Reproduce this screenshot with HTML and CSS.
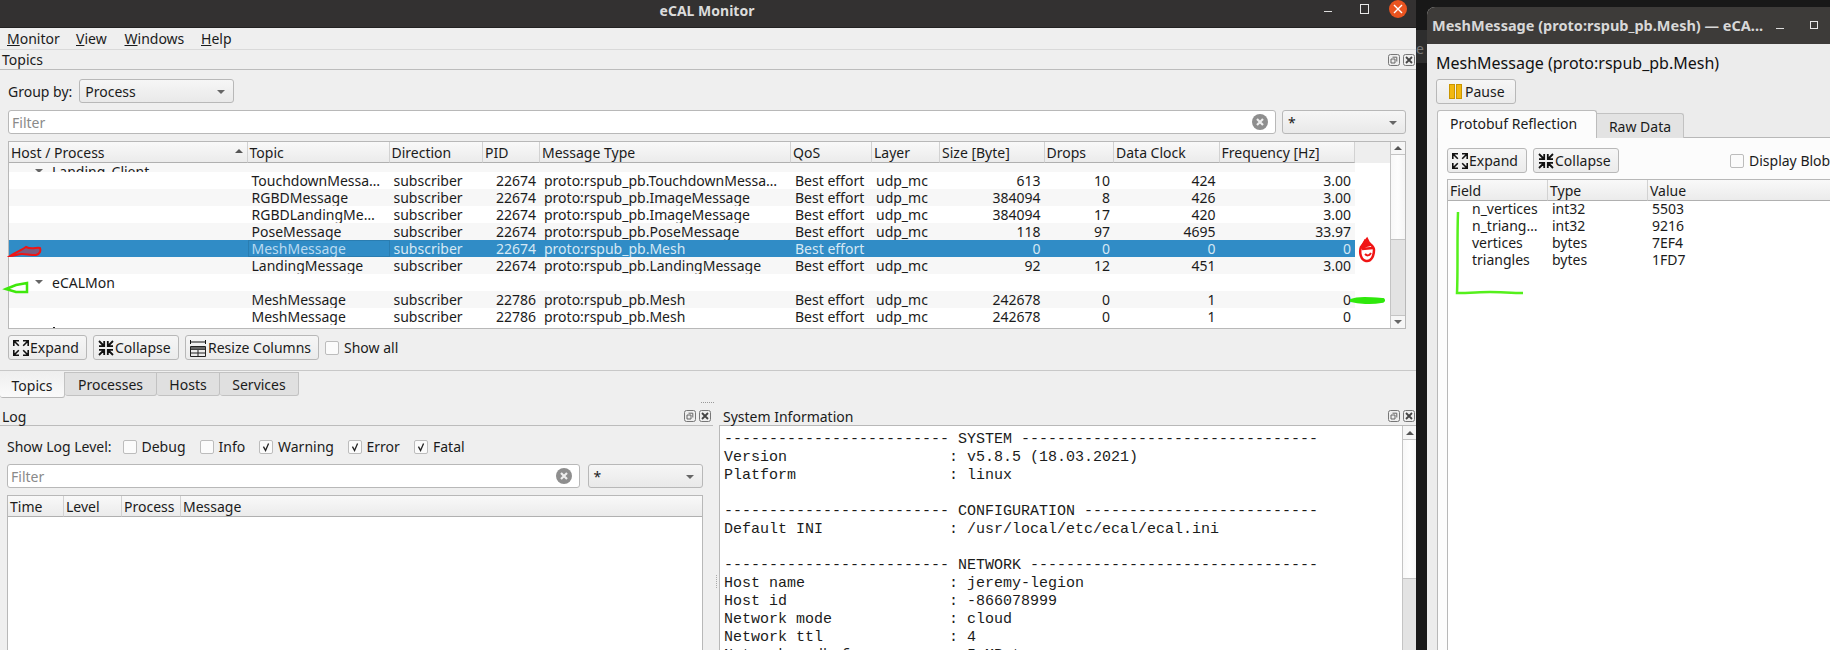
FILE: index.html
```html
<!DOCTYPE html>
<html lang="en">
<head>
<meta charset="utf-8">
<title>eCAL Monitor</title>
<link rel="stylesheet" href="styles.css">
</head>
<body>
<svg class="defs" width="0" height="0" aria-hidden="true">
  <symbol id="i-expand" viewBox="0 0 16 16"><path d="M.8 6V.8H6M.8 .8l5 5M10 .8h5.200V6M15.200 .8l-5 5M.8 10v5.200H6M.8 15.200l5-5M10 15.200h5.200V10M15.200 15.200l-5-5" fill="none" stroke="#111" stroke-width="1.600"/></symbol>
  <symbol id="i-collapse" viewBox="0 0 16 16"><path d="M1 1l5 5M6.200 1v5.200H1M15 1l-5 5M9.800 1v5.200H15M1 15l5-5M6.200 15V9.800H1M15 15l-5-5M9.800 15V9.800H15" fill="none" stroke="#111" stroke-width="1.800"/></symbol>
  <symbol id="i-resize" viewBox="0 0 16 18"><path d="M.5 1v4M15.500 1v4M1 3h14" fill="none" stroke="#111" stroke-width="1"/><path d="M.5 7.500h15v10H.5zM.5 10.500h15M8 7.500v10M.5 14h15" fill="none" stroke="#222" stroke-width="1"/><path d="M1 8h14v2.500H1z" fill="#666"/></symbol>
  <symbol id="i-float" viewBox="0 0 12 12"><rect x=".5" y=".5" width="11" height="11" rx="2" fill="#eee" stroke="#777"/><path d="M4.500 3.200h4.300v4.300M3 5h4v4H3z" fill="none" stroke="#666"/></symbol>
  <symbol id="i-close" viewBox="0 0 12 12"><rect x=".5" y=".5" width="11" height="11" rx="2" fill="#eee" stroke="#777"/><path d="M3 3l6 6M9 3l-6 6" stroke="#444" stroke-width="1.800"/></symbol>
  <symbol id="i-clear" viewBox="0 0 16 16"><circle cx="8" cy="8" r="8" fill="#8e8e8e"/><path d="M5 5l6 6M11 5l-6 6" stroke="#eee" stroke-width="2.200"/></symbol>
  <symbol id="i-check" viewBox="0 0 14 14"><path d="M4 6.500l2.500 4.500 3.500-8" fill="none" stroke="#222" stroke-width="1.500"/></symbol>
</svg>

<div class="desktop">
  <div class="ghost">e</div>

  <main class="window main-window">
    <header class="titlebar">
      <span class="title">eCAL Monitor</span>
      <span class="controls">
        <span class="ctl-min"></span>
        <span class="ctl-max"></span>
        <span class="ctl-close">
          <svg width="10" height="10" viewBox="0 0 10 10"><path d="M1 1l8 8M9 1l-8 8" stroke="#fff" stroke-width="1.400"/></svg>
        </span>
      </span>
    </header>

    <nav class="menubar">
      <span class="m-monitor"><u>M</u>onitor</span>
      <span class="m-view"><u>V</u>iew</span>
      <span class="m-windows"><u>W</u>indows</span>
      <span class="m-help"><u>H</u>elp</span>
    </nav>

    <section class="topics-dock">
      <div class="dock-title"><span>Topics</span>
        <span class="dock-btns"><svg><use href="#i-float"/></svg><svg><use href="#i-close"/></svg></span>
      </div>
      <div class="groupby">
        <span>Group by:</span>
        <div class="combo combo-process"><span>Process</span><i class="down"></i></div>
      </div>
      <div class="filter-row">
        <div class="filter"><span>Filter</span><svg class="clear"><use href="#i-clear"/></svg></div>
        <div class="combo combo-star"><span>*</span><i class="down"></i></div>
      </div>

      <div class="tree">
        <div class="tree-main">
          <div class="thead">
            <div class="row-grid">
              <div class="th th-sort">Host / Process<i class="up"></i></div>
              <div class="th">Topic</div><div class="th">Direction</div><div class="th">PID</div><div class="th">Message Type</div><div class="th">QoS</div><div class="th">Layer</div><div class="th">Size [Byte]</div><div class="th">Drops</div><div class="th">Data Clock</div><div class="th">Frequency [Hz]</div>
            </div>
          </div>
          <div class="tbody">
            <div class="row-grid tr clip-top alt"><div class="host"><i class="down tw"></i>Landing_Client</div></div>
            <div class="row-grid tr"><div></div><div class="tp">TouchdownMessa…</div><div>subscriber</div><div class="r">22674</div><div>proto:rspub_pb.TouchdownMessa…</div><div>Best effort</div><div>udp_mc</div><div class="r">613</div><div class="r">10</div><div class="r">424</div><div class="r">3.00</div></div>
            <div class="row-grid tr alt"><div></div><div class="tp">RGBDMessage</div><div>subscriber</div><div class="r">22674</div><div>proto:rspub_pb.ImageMessage</div><div>Best effort</div><div>udp_mc</div><div class="r">384094</div><div class="r">8</div><div class="r">426</div><div class="r">3.00</div></div>
            <div class="row-grid tr"><div></div><div class="tp">RGBDLandingMe…</div><div>subscriber</div><div class="r">22674</div><div>proto:rspub_pb.ImageMessage</div><div>Best effort</div><div>udp_mc</div><div class="r">384094</div><div class="r">17</div><div class="r">420</div><div class="r">3.00</div></div>
            <div class="row-grid tr alt"><div></div><div class="tp">PoseMessage</div><div>subscriber</div><div class="r">22674</div><div>proto:rspub_pb.PoseMessage</div><div>Best effort</div><div>udp_mc</div><div class="r">118</div><div class="r">97</div><div class="r">4695</div><div class="r">33.97</div></div>
            <div class="row-grid tr sel"><div></div><div class="tp focus">MeshMessage</div><div>subscriber</div><div class="r">22674</div><div>proto:rspub_pb.Mesh</div><div>Best effort</div><div></div><div class="r">0</div><div class="r">0</div><div class="r">0</div><div class="r">0</div></div>
            <div class="row-grid tr alt"><div></div><div class="tp">LandingMessage</div><div>subscriber</div><div class="r">22674</div><div>proto:rspub_pb.LandingMessage</div><div>Best effort</div><div>udp_mc</div><div class="r">92</div><div class="r">12</div><div class="r">451</div><div class="r">3.00</div></div>
            <div class="row-grid tr"><div class="host"><i class="down tw"></i>eCALMon</div></div>
            <div class="row-grid tr alt"><div></div><div class="tp">MeshMessage</div><div>subscriber</div><div class="r">22786</div><div>proto:rspub_pb.Mesh</div><div>Best effort</div><div>udp_mc</div><div class="r">242678</div><div class="r">0</div><div class="r">1</div><div class="r">0</div></div>
            <div class="row-grid tr"><div></div><div class="tp">MeshMessage</div><div>subscriber</div><div class="r">22786</div><div>proto:rspub_pb.Mesh</div><div>Best effort</div><div>udp_mc</div><div class="r">242678</div><div class="r">0</div><div class="r">1</div><div class="r">0</div></div>
            <div class="row-grid tr clip-bottom"><div class="host"><i class="dot"></i></div></div>
          </div>
        </div>
        <div class="scrollbar sb-topics">
          <div class="sb-btn"><i class="up"></i></div>
          <div class="sb-handle"></div>
          <div class="sb-track"></div>
          <div class="sb-btn sb-btn-end"><i class="down"></i></div>
        </div>
      </div>

      <div class="tool-row">
        <button class="btn b-expand"><svg class="ic"><use href="#i-expand"/></svg>Expand</button>
        <button class="btn b-collapse"><svg class="ic"><use href="#i-collapse"/></svg>Collapse</button>
        <button class="btn b-resize"><svg class="ic ic-r"><use href="#i-resize"/></svg>Resize Columns</button>
        <span class="cb"></span><span class="cb-label">Show all</span>
      </div>
    </section>

    <div class="hsplit"></div>

    <div class="tabbar">
      <span class="tab active">Topics</span>
      <span class="tab t-proc">Processes</span>
      <span class="tab t-host">Hosts</span>
      <span class="tab t-serv">Services</span>
    </div>

    <div class="bottom">
      <section class="log-dock">
        <div class="dock-title dt-bottom"><span>Log</span>
          <span class="dock-btns"><svg><use href="#i-float"/></svg><svg><use href="#i-close"/></svg></span>
        </div>
        <div class="levels">
          <span class="lv-label">Show Log Level:</span>
          <span class="cb"></span><span class="lv lv-debug">Debug</span>
          <span class="cb"></span><span class="lv lv-info">Info</span>
          <span class="cb"><svg><use href="#i-check"/></svg></span><span class="lv lv-warn">Warning</span>
          <span class="cb"><svg><use href="#i-check"/></svg></span><span class="lv lv-err">Error</span>
          <span class="cb"><svg><use href="#i-check"/></svg></span><span class="lv">Fatal</span>
        </div>
        <div class="filter-row log-filter">
          <div class="filter"><span>Filter</span><svg class="clear"><use href="#i-clear"/></svg></div>
          <div class="combo combo-star2"><span>*</span><i class="down"></i></div>
        </div>
        <div class="log-table">
          <div class="log-head">
            <div class="th">Time</div><div class="th">Level</div><div class="th">Process</div><div class="th th-last">Message</div>
          </div>
        </div>
      </section>
      <div class="vsplit"></div>
      <section class="sys-dock">
        <div class="dock-title dt-sys"><span>System Information</span>
          <span class="dock-btns"><svg><use href="#i-float"/></svg><svg><use href="#i-close"/></svg></span>
        </div>
        <div class="sys-frame">
<pre class="sys-text">------------------------- SYSTEM ---------------------------------
Version                  : v5.8.5 (18.03.2021)
Platform                 : linux

------------------------- CONFIGURATION --------------------------
Default INI              : /usr/local/etc/ecal/ecal.ini

------------------------- NETWORK --------------------------------
Host name                : jeremy-legion
Host id                  : -866078999
Network mode             : cloud
Network ttl              : 4
Network sndbuf           : 5 MByte</pre>
          <div class="scrollbar sb-sys">
            <div class="sb-btn"><i class="up"></i></div>
            <div class="sb-handle"></div>
            <div class="sb-track"></div>
          </div>
        </div>
      </section>
    </div>
    <i class="grip grip-h"></i>
    <i class="grip grip-v"></i>
  </main>

  <aside class="window side-window">
    <header class="side-title">
      <span class="side-title-text">MeshMessage (proto:rspub_pb.Mesh) — eCA...</span>
      <span class="ctl-min side-min"></span>
      <span class="ctl-max side-max"></span>
    </header>
    <h1 class="side-heading">MeshMessage (proto:rspub_pb.Mesh)</h1>
    <button class="btn b-pause"><span class="pause"><i></i><i></i></span>Pause</button>
    <div class="side-tabs">
      <span class="stab active">Protobuf Reflection</span>
      <span class="stab">Raw Data</span>
    </div>
    <div class="side-pane">
      <div class="side-tools">
        <button class="btn b-sexpand"><svg class="ic"><use href="#i-expand"/></svg>Expand</button>
        <button class="btn b-scollapse"><svg class="ic"><use href="#i-collapse"/></svg>Collapse</button>
        <span class="cb cb-blob"></span><span class="cb-label">Display Blob</span>
      </div>
      <div class="side-tree">
        <div class="side-head"><div class="th">Field</div><div class="th">Type</div><div class="th th-last">Value</div></div>
        <div class="side-rows">
          <div class="side-row"><div>n_vertices</div><div>int32</div><div>5503</div></div>
          <div class="side-row"><div>n_triang…</div><div>int32</div><div>9216</div></div>
          <div class="side-row"><div>vertices</div><div>bytes</div><div>7EF4</div></div>
          <div class="side-row"><div>triangles</div><div>bytes</div><div>1FD7</div></div>
        </div>
      </div>
    </div>
  </aside>

  <svg class="scribbles" width="1830" height="650" viewBox="0 0 1830 650" aria-hidden="true">
    <path d="M10 256C16 252 22 250 26 247C32 250 36 247 40 248C41 251 40 254 36 255C30 255 26 254 22 254C18 254 14 256 10 256Z" fill="#f01414" fill-opacity=".4" stroke="#f01414" stroke-width="2"/>
    <path d="M6 289L16 285L27 283V292L16 292L6 289Z" fill="none" stroke="#3fe80c" stroke-width="2.500"/>
    <path d="M1367 239L1361 247C1359 253 1361 260 1366 261C1371 262 1374 256 1374 250C1374 246 1371 245 1369 243Z" fill="none" stroke="#f01414" stroke-width="2.500"/>
    <path d="M1362 249L1373 248M1365 241L1370 245L1362 247Z" fill="#f01414" stroke="#f01414" stroke-width="2.500"/>
    <path d="M1365 254C1367 256 1369 256 1371 253" fill="none" stroke="#f01414" stroke-width="2"/>
    <path d="M1351 300C1358 297 1370 298 1383 299C1385 300 1384 302 1381 302C1372 304 1358 303 1351 301Z" fill="#2fe80c" stroke="#2fe80c" stroke-width="2"/>
    <path d="M1458 212C1457 240 1458 270 1457 293C1470 293 1480 292 1490 292C1500 292 1512 293 1523 293" fill="none" stroke="#55f01c" stroke-width="2.500"/>
  </svg>
</div>
</body>
</html>
```
FILE: styles.css
```css
* { box-sizing: border-box; }
html, body { margin: 0; padding: 0; height: 650px; overflow: hidden; background: #181818; }
body { font: 14px/17px "Noto Sans", "Open Sans", sans-serif; color: #1b1b1b; }
.defs { position: absolute; }
i { display: block; font-style: normal; }

.desktop { position: relative; width: 1830px; height: 650px; overflow: hidden; background: #181818; }
.ghost { position: absolute; left: 1416px; top: 30px; width: 11px; height: 33px; padding-top: 10px; background: #2e2e2e; color: #777; overflow: hidden; }

.main-window { position: relative; width: 1416px; height: 650px; display: flex; flex-direction: column; background: #efefef; overflow: hidden; }
.titlebar { flex: none; height: 28px; background: #333131; display: flex; align-items: center; justify-content: center; position: relative; border-bottom: 1px solid #232222; }
.title { color: #dcdcdc; font-weight: 700; font-size: 14px; margin-left: -2px; margin-top: -7px; }
.controls { position: absolute; inset: 0 0 0 auto; width: 0; }
.ctl-min { position: absolute; left: -92px; top: 11px; width: 8px; height: 1px; background: #ddd; }
.ctl-max { position: absolute; left: -56px; top: 4px; width: 9px; height: 10px; border: 1px solid #e8e8e8; }
.ctl-close { position: absolute; left: -27px; top: 0; width: 18px; height: 18px; border-radius: 50%; background: #e95420; display: flex; align-items: center; justify-content: center; }

.menubar { flex: none; height: 22px; display: flex; align-items: center; border-bottom: 1px solid #d9d9d9; padding-left: 7px; }
.m-monitor { width: 69px; } .m-view { width: 48.500px; } .m-windows { width: 76.500px; }

.dock-title { display: flex; align-items: center; justify-content: space-between; height: 20px; border-bottom: 1px solid #bcbcbc; padding: 0 1px 0 2px; }
.dock-btns { display: flex; gap: 3px; }
.dock-btns svg { width: 12px; height: 12px; display: block; }

.topics-dock { flex: none; height: 320px; }
.groupby { display: flex; align-items: center; gap: 7px; height: 24px; margin: 9px 0 0 8px; }
.combo { position: relative; height: 24px; border: 1px solid #b8b8b8; border-radius: 3px; background: linear-gradient(#f6f6f6, #e9e9e9); display: flex; align-items: center; padding-left: 5px; }
.combo .down { position: absolute; right: 8px; top: 10px; }
.combo-process { width: 155px; }
.down { width: 0; height: 0; border-left: 4px solid transparent; border-right: 4px solid transparent; border-top: 4px solid #666; }
.up { width: 0; height: 0; border-left: 4px solid transparent; border-right: 4px solid transparent; border-bottom: 4px solid #555; }

.filter-row { display: flex; gap: 6px; height: 24px; margin: 7px 10px 0 8px; }
.filter { flex: 1; position: relative; background: #fff; border: 1px solid #b8b8b8; border-radius: 3px; color: #8a8a8a; padding-left: 3px; display: flex; align-items: center; }
.clear { position: absolute; right: 7px; top: 3px; width: 16px; height: 16px; }
.combo-star { width: 124px; }

.tree { display: flex; height: 188px; margin: 7px 10px 0 8px; border: 1px solid #b8b8b8; background: #fff; }
.tree-main { flex: 1; min-width: 0; }
.row-grid { display: grid; grid-template-columns: 238.500px 142px 93.500px 57px 251px 81px 68px 104.500px 69.500px 105.500px 135.500px; width: 1346px; }
.thead { height: 21px; background: #eee; }
.th { height: 21px; line-height: 21px; padding-left: 2px; background: linear-gradient(#f9f9f9, #ebebeb); border-right: 1px solid #d2d2d2; border-bottom: 1px solid #b0b0b0; position: relative; white-space: nowrap; overflow: hidden; }
.th .up { position: absolute; right: 4px; top: 7px; }
.tr { height: 17px; overflow: hidden; white-space: nowrap; }
.tr > div { padding-left: 4px; overflow: hidden; height: 17px; }
.tr > .r { text-align: right; padding: 0 4px 0 0; }
.tr > .tp { padding-left: 4px; }
.alt { background: #f7f7f7; }
.sel { background: #308cc6; color: #d6e8f4; }
.sel .tp { color: #b9daf0; box-shadow: inset 0 0 0 1px #2a7db1; }
.tbody { height: 165px; overflow: hidden; }
.clip-top { height: 9px; align-items: end; }
.tr > .host { padding-left: 43px; position: relative; grid-column: 1 / 4; }
.tw { position: absolute; left: 26px; top: 6px; }
.clip-bottom { height: 4px; background: #fff; }
.dot { position: absolute; left: 44px; top: 2px; width: 2px; height: 2px; background: #222; }

.scrollbar { flex: none; display: flex; flex-direction: column; border-left: 1px solid #c4c4c4; background: #e3e3e3; }
.sb-topics { width: 15px; }
.sb-btn { flex: none; height: 13px; background: #f6f6f6; border-bottom: 1px solid #c4c4c4; display: flex; align-items: center; justify-content: center; }
.sb-btn-end { border-bottom: 0; border-top: 1px solid #c4c4c4; }
.sb-handle { flex: none; height: 85px; background: linear-gradient(90deg, #f8f8f8, #fdfdfd, #f5f5f5); border-bottom: 1px solid #c4c4c4; }
.sb-track { flex: 1; }

.tool-row { display: flex; align-items: center; height: 25px; margin: 6px 0 0 8px; }
.btn { height: 25px; padding: 0 0 0 4px; border: 1px solid #b8b8b8; border-radius: 3px; background: linear-gradient(#f6f6f6, #ebebeb); font: inherit; color: inherit; display: flex; align-items: center; }
.ic { width: 16px; height: 16px; flex: none; margin-right: 1px; }
.ic-r { height: 18px; margin-right: 2px; }
.b-expand { width: 79px; } .b-collapse { width: 86px; margin-left: 6px; } .b-resize { width: 134px; margin-left: 6px; }
.cb { width: 14px; height: 14px; flex: none; border: 1px solid #bcbcbc; border-radius: 2px; background: #fbfbfb; display: block; }
.cb svg { display: block; width: 12px; height: 12px; }
.tool-row .cb { margin-left: 6px; }
.cb-label { margin-left: 5px; }

.hsplit { flex: none; height: 2px; border-top: 1px solid #c8c8c8; }
.tabbar { flex: none; display: flex; align-items: flex-start; height: 27px; }
.tab { height: 24px; border: 1px solid #c2c2c2; border-left: 0; border-radius: 0 0 3px 3px; background: #e0e0e0; line-height: 23px; text-align: center; }
.tab.active { height: 26px; width: 65px; background: linear-gradient(#efefef, #fafafa); border: 0; border-right: 1px solid #c2c2c2; border-bottom: 1px solid #b8b8b8; line-height: 27px; }
.t-proc { width: 92px; } .t-host { width: 63px; } .t-serv { width: 79px; }

.bottom { flex: 1; display: flex; min-height: 0; }
.log-dock { width: 713px; flex: none; }
.dt-bottom, .dt-sys { height: 27px; align-items: flex-end; }
.dt-bottom { padding-left: 2px; padding-right: 2px; }
.dt-bottom .dock-btns, .dt-sys .dock-btns { margin-bottom: 3px; }
.levels { display: flex; align-items: center; height: 17px; margin: 12px 0 0 7px; }
.lv-label { width: 115.500px; }
.lv { margin-left: 5px; }
.lv-debug { width: 58px; } .lv-info { width: 40.500px; } .lv-warn { width: 69.500px; } .lv-err { width: 47.500px; }
.log-filter { margin: 9px 10.500px 0 7px; gap: 8px; }
.combo-star2 { width: 115px; }
.log-table { height: 200px; margin: 7px 10.500px 0 7px; border: 1px solid #b8b8b8; background: #fff; }
.log-head { display: grid; grid-template-columns: 56px 58px 59px 1fr; }
.th-last { border-right: 0; }
.vsplit { flex: none; width: 6px; }
.sys-dock { flex: 1; min-width: 0; }
.dt-sys { padding-left: 4px; padding-right: 1px; border-bottom: 0; height: 26px; }
.sys-frame { display: flex; height: 225px; border: 1px solid #b8b8b8; border-right: 0; border-bottom: 0; background: #fff; }
.sys-text { flex: 1; margin: 0; padding: 5px 4px 0; overflow: hidden; font: 15px/18px "Liberation Mono", monospace; color: #1b1b1b; }
.sb-sys { width: 14px; }
.sb-sys .sb-btn { height: 14px; }
.sb-sys .sb-handle { height: 139px; }

.grip { position: absolute; }
.grip-h { left: 701px; top: 402px; width: 14px; height: 1px; background: repeating-linear-gradient(90deg, #999 0 1px, transparent 1px 2px); }
.grip-v { left: 716px; top: 575px; width: 1px; height: 14px; background: repeating-linear-gradient(#aaa 0 1px, transparent 1px 2px); }

.side-window { position: absolute; left: 1427px; top: 7px; width: 420px; height: 660px; background: #ececec; border-radius: 8px 8px 0 0; overflow: hidden; display: flex; flex-direction: column; }
.side-title { flex: none; position: relative; height: 37px; background: #3d3b39; display: flex; align-items: center; padding-left: 5px; }
.side-title-text { color: #d8d8d8; font-weight: 700; font-size: 14.500px; white-space: nowrap; margin-top: -1px; }
.side-min { left: 349px; top: 21px; width: 8px; }
.side-max { left: 383px; top: 14px; width: 8px; height: 8px; }
.side-heading { flex: none; margin: 9px 0 0 9px; font: 16px/20px "Noto Sans", sans-serif; color: #111; white-space: nowrap; }
.b-pause { flex: none; width: 80px; height: 25px; margin: 6px 0 0 9px; padding-left: 12px; }
.pause { display: flex; gap: 1px; margin-right: 3px; }
.pause i { width: 6px; height: 15px; background: #f2b80f; border: 1px solid #c99500; }
.side-tabs { flex: none; display: flex; align-items: flex-end; height: 28px; margin: 6px 0 0 10px; position: relative; z-index: 1; }
.stab { height: 25px; width: 87px; background: #e3e3e3; border: 1px solid #c2c2c2; border-left: 0; border-bottom: 0; border-radius: 0 3px 0 0; line-height: 26px; text-align: center; }
.stab.active { width: 160px; height: 28px; padding-left: 12px; background: #fcfcfc; border: 1px solid #bcbcbc; border-bottom: 0; border-radius: 3px 3px 0 0; line-height: 26px; text-align: left; }
.side-pane { flex: 1; margin: -1px 0 0 10px; border: 1px solid #b8b8b8; background: #fcfcfc; padding: 10px 0 0 9px; }
.side-tools { display: flex; align-items: center; height: 25px; }
.b-sexpand { width: 80px; } .b-scollapse { width: 86px; margin-left: 6px; }
.cb-blob { margin-left: 111px; }
.side-tree { margin-top: 6px; height: 500px; width: 420px; border: 1px solid #b8b8b8; background: #fff; }
.side-head { display: grid; grid-template-columns: 100px 100px 1fr; }
.side-rows { margin-top: -1px; }
.side-row { display: grid; grid-template-columns: 80px 100px 1fr; height: 17px; padding-left: 24px; white-space: nowrap; }

.scribbles { position: absolute; left: 0; top: 0; pointer-events: none; }
```
